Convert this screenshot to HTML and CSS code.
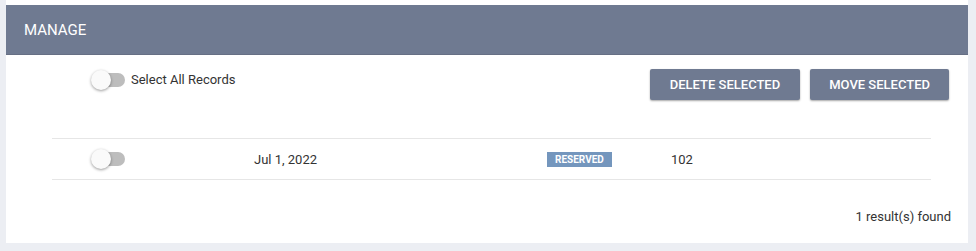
FILE: index.html
```html
<!DOCTYPE html>
<html lang="en">
<head>
    <meta charset="UTF-8">
    <title>Manage Records</title>
    <link rel="stylesheet" href="styles.css">
</head>
<body>
    <div class="card">
        <div class="card_header">MANAGE</div>

        <div class="toolbar">
            <label class="select_all">
                <span class="toggle"><span class="knob"></span></span>
                <span>Select All Records</span>
            </label>
            <div class="actions">
                <button class="btn">Delete Selected</button>
                <button class="btn">Move Selected</button>
            </div>
        </div>

        <div class="records">
            <div class="record">
                <div class="cell cell_toggle">
                    <span class="toggle"><span class="knob"></span></span>
                </div>
                <div class="cell">Jul 1, 2022</div>
                <div class="cell"><span class="badge">Reserved</span></div>
                <div class="cell">102</div>
            </div>
        </div>

        <div class="results">1 result(s) found</div>
    </div>
</body>
</html>
```

FILE: styles.css
```css
body{
    margin: 0;
    background-color: #eceef3;
    font-family: Roboto, "Liberation Sans", sans-serif;
    color: #333;
}
.card{
    margin: 0 8px 0 6px;
    background: white;
    padding-top: 5px;
    height: 238px;
}
.card_header{
    height: 50px;
    box-sizing: border-box;
    background-color: #6f7a91;
    border-bottom: 1px solid #666f84;
    color: white;
    font-size: 15px;
    line-height: 50px;
    padding-left: 18px;
}
.toolbar{
    display: flex;
    justify-content: space-between;
    align-items: flex-start;
    padding: 14px 19px 0 85px;
}
.select_all{
    display: flex;
    align-items: center;
    gap: 6px;
    font-size: 13px;
    margin-top: 3px;
}
.toggle{
    position: relative;
    display: inline-block;
    width: 32px;
    height: 14px;
    border-radius: 7px;
    background-color: #bdbdbd;
    margin-left: 2px;
}
.knob{
    position: absolute;
    left: -2px;
    top: -3px;
    width: 20px;
    height: 20px;
    border-radius: 50%;
    background: #fafafa;
    box-shadow: 0 1px 3px rgba(0,0,0,.4);
}
.actions{
    display: flex;
    gap: 10px;
}
.btn{
    height: 31px;
    padding: 0 20px;
    border: none;
    border-radius: 2px;
    background-color: #6f7a91;
    color: white;
    font-family: Roboto, "Liberation Sans", sans-serif;
    font-size: 13px;
    font-weight: 500;
    text-transform: uppercase;
    box-shadow: 0 1px 2px rgba(0,0,0,.35);
}
.btn + .btn{
    padding: 0 19px;
}
.records{
    margin: 38px 37px 0 46px;
    border-top: 1px solid #e6e6e6;
    border-bottom: 1px solid #e6e6e6;
}
.record{
    display: grid;
    grid-template-columns: 202px 293px 124px 1fr;
    align-items: center;
    height: 40px;
    font-size: 13px;
}
.cell_toggle{
    padding-left: 39px;
    display: flex;
    align-items: center;
}
.badge{
    display: inline-block;
    background-color: #7496bd;
    color: white;
    font-size: 10px;
    font-weight: 700;
    text-transform: uppercase;
    line-height: 15px;
    padding: 0 8px;
}
.results{
    text-align: right;
    font-size: 13px;
    padding: 29px 17px 0 0;
}
```
